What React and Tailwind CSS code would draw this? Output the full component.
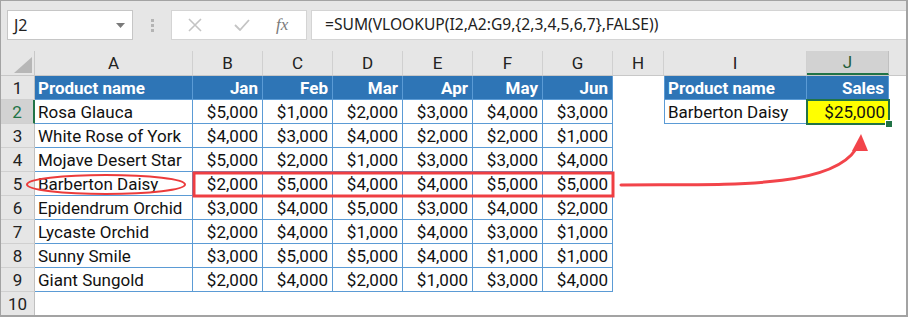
import React from "react";

const rows = [
  ["Rosa Glauca", 5, 1, 2, 3, 4, 3],
  ["White Rose of York", 4, 3, 4, 2, 2, 1],
  ["Mojave Desert Star", 5, 2, 1, 3, 3, 4],
  ["Barberton Daisy", 2, 5, 4, 4, 5, 5],
  ["Epidendrum Orchid", 3, 4, 5, 3, 4, 2],
  ["Lycaste Orchid", 2, 4, 1, 4, 3, 1],
  ["Sunny Smile", 3, 5, 5, 4, 1, 1],
  ["Giant Sungold", 2, 4, 2, 1, 3, 4],
];
const months = ["Jan", "Feb", "Mar", "Apr", "May", "Jun"];

const font = { fontFamily: "Roboto, 'Liberation Sans', sans-serif" };

function RowHead({ n, active }) {
  return (
    <div
      className={
        "w-[34px] h-[24px] shrink-0 flex items-center justify-center pt-[2px] text-[17px] border-b border-[#d0d0d0] " +
        (active
          ? "bg-[#d2d2d2] text-[#217346] border-r-2 border-r-[#217346]"
          : "bg-[#e6e6e6] text-[#222] border-r border-r-[#c0c0c0]")
      }
    >
      {n}
    </div>
  );
}

function Cell({ w, children, head, right, blank, extra = "" }) {
  if (blank) return <div className={"h-[24px] shrink-0 " + w + " " + extra} />;
  return (
    <div
      className={
        "h-[24px] shrink-0 box-border border-r border-b border-[#5b9bd5] flex items-center pt-[2px] text-[17px] whitespace-nowrap " +
        w +
        " " +
        (head ? "bg-[#2e75b6] text-white font-bold " : "bg-white text-[#111] ") +
        (right ? "justify-end pr-[4px] " : "pl-[3px] ") +
        extra
      }
    >
      {children}
    </div>
  );
}

export default function App() {
  return (
    <div
      className="w-[908px] h-[317px] box-border border-t border-l border-r-2 border-b-2 border-[#a3a3a3] bg-white relative overflow-hidden"
      style={font}
    >
      {/* toolbar */}
      <div className="h-[50px] bg-[#e6e6e6] flex items-start pt-[9px] pl-[6px]">
        <div className="w-[126px] h-[30px] bg-white border border-[#c6c6c6] flex items-center justify-between pl-[6px] pr-[7px]">
          <span className="text-[16px] text-[#222]" style={{ fontFamily: "'Noto Sans', sans-serif" }}>J2</span>
          <svg width="9" height="5" viewBox="0 0 9 5">
            <polygon points="0,0 9,0 4.5,5" fill="#7a7a7a" />
          </svg>
        </div>
        <div className="w-[38px] h-[30px] flex flex-col items-center justify-center gap-[2px]">
          <div className="w-[3px] h-[3px] bg-[#b4b4b4]" />
          <div className="w-[3px] h-[3px] bg-[#b4b4b4]" />
          <div className="w-[3px] h-[3px] bg-[#b4b4b4]" />
        </div>
        <div className="w-[136px] h-[30px] bg-white border border-[#d4d4d4] flex items-center">
          <svg width="14" height="14" viewBox="0 0 14 14" className="ml-[16px]">
            <path d="M1 1 L13 13 M13 1 L1 13" stroke="#c4c4c4" strokeWidth="1.6" />
          </svg>
          <svg width="16" height="12" viewBox="0 0 16 12" className="ml-[32px]">
            <path d="M1 6 L6 11 L15 1" stroke="#c4c4c4" strokeWidth="1.8" fill="none" />
          </svg>
          <span
            className="ml-[26px] text-[17px] italic text-[#7a7a7a]"
            style={{ fontFamily: "'Liberation Serif', serif" }}
          >
            fx
          </span>
        </div>
        <div className="flex-1 ml-[4px] h-[30px] bg-white border-t border-b border-l border-[#d4d4d4] flex items-center pl-[13px]">
          <span className="text-[15.6px] text-[#222]" style={{ fontFamily: "'Noto Sans', sans-serif" }}>
            =SUM(VLOOKUP(I2,A2:G9,{"{"}2,3,4,5,6,7{"}"},FALSE))
          </span>
        </div>
      </div>

      {/* column headers */}
      <div className="flex h-[24px] bg-[#e6e6e6] border-b border-[#c8c8c8] box-content">
        <div className="w-[34px] h-[24px] shrink-0 border-r border-[#c8c8c8] relative">
          <svg width="18" height="16" viewBox="0 0 18 16" className="absolute right-[2px] bottom-[2px]">
            <polygon points="0,16 18,16 18,0" fill="#b7b7b7" />
          </svg>
        </div>
        {[
          ["A", "w-[158px]"],
          ["B", "w-[70px]"],
          ["C", "w-[70px]"],
          ["D", "w-[70px]"],
          ["E", "w-[70px]"],
          ["F", "w-[70px]"],
          ["G", "w-[70px]"],
          ["H", "w-[51px]"],
          ["I", "w-[143px]"],
        ].map(([l, w]) => (
          <div
            key={l}
            className={
              "h-[24px] shrink-0 border-r border-[#d0d0d0] flex items-center justify-center pt-[2px] text-[17px] text-[#222] " + w
            }
          >
            {l}
          </div>
        ))}
        <div className="w-[82px] h-[24px] shrink-0 bg-[#d2d2d2] border-r border-[#c0c0c0] border-b-2 border-b-[#217346] flex items-center justify-center pt-[2px] text-[17px] text-[#1f5e3a] box-border">
          J
        </div>
        <div className="flex-1" />
      </div>

      {/* row 1 */}
      <div className="flex">
        <RowHead n={1} />
        <Cell w="w-[158px]" head>Product name</Cell>
        {months.map((m) => (
          <Cell key={m} w="w-[70px]" head right>
            {m}
          </Cell>
        ))}
        <Cell w="w-[51px]" blank />
        <Cell w="w-[143px]" head extra="border-l">
          Product name
        </Cell>
        <Cell w="w-[82px]" head right>
          Sales
        </Cell>
      </div>

      {rows.map((r, i) => (
        <div className="flex" key={r[0]}>
          <RowHead n={i + 2} active={i === 0} />
          <Cell w="w-[158px]">{r[0]}</Cell>
          {r.slice(1).map((v, j) => (
            <Cell key={j} w="w-[70px]" right>
              <span>${v},000</span>
            </Cell>
          ))}
          <Cell w="w-[51px]" blank />
          {i === 0 ? (
            <>
              <Cell w="w-[143px]" extra="border-l">
                Barberton Daisy
              </Cell>
              <div className="w-[82px] h-[24px] shrink-0 bg-[#ffff00] relative flex items-center justify-end pt-[2px] pr-[4px] text-[17px] text-[#111]">
                <span>$25,000</span>
                <div className="absolute left-[-1px] top-[-1px] right-[-1px] bottom-[-1px] border-2 border-[#217346]" />
                <div className="absolute right-[-4px] bottom-[-4px] w-[6px] h-[6px] bg-[#217346] border border-white box-content" />
              </div>
            </>
          ) : (
            <>
              <Cell w="w-[143px]" blank />
              <Cell w="w-[82px]" blank />
            </>
          )}
        </div>
      ))}

      <div className="flex">
        <RowHead n={10} />
      </div>

      {/* annotations */}
      <svg className="absolute left-[-1px] top-[-1px] pointer-events-none" width="908" height="317" viewBox="0 0 908 317">
        <ellipse cx="106" cy="184.5" rx="79" ry="9.5" fill="none" stroke="#ec3b3b" strokeWidth="2" />
        <rect x="194" y="173" width="419" height="23" fill="none" stroke="#ef3e42" strokeWidth="3" />
        <path d="M621 185 C 720 184, 830 190, 856 149" fill="none" stroke="#f2444a" strokeWidth="3" strokeLinecap="round" />
        <polygon points="861,134 852,151 868,151" fill="#f2444a" />
      </svg>
    </div>
  );
}
